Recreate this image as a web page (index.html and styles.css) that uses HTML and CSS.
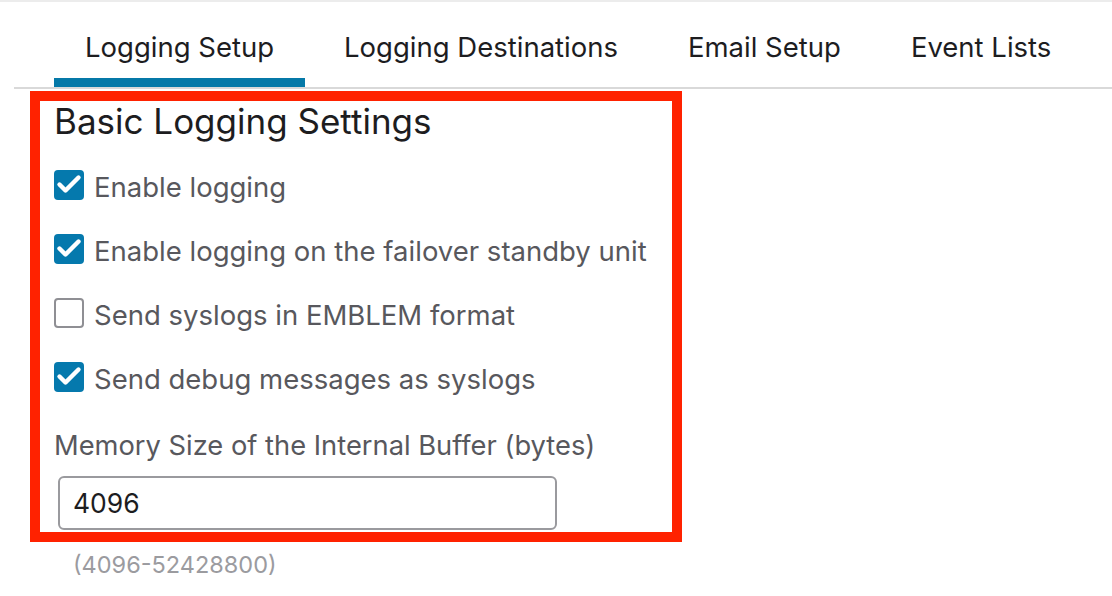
FILE: index.html
```html
<!DOCTYPE html>
<html lang="en">
<head>
<meta charset="utf-8">
<title>Logging Setup</title>
<link rel="stylesheet" href="styles.css">
</head>
<body>
<div class="page">
  <nav class="tabs">
    <a class="tab active">Logging Setup</a>
    <a class="tab">Logging Destinations</a>
    <a class="tab">Email Setup</a>
    <a class="tab">Event Lists</a>
  </nav>

  <section class="panel">
    <h2 class="panel-title">Basic Logging Settings</h2>

    <label class="check-row">
      <span class="box checked"><svg viewBox="0 0 30 30"><path d="M5.5 14.5l6 6L24.5 7.5" /></svg></span>
      <span class="check-label">Enable logging</span>
    </label>
    <label class="check-row">
      <span class="box checked"><svg viewBox="0 0 30 30"><path d="M5.5 14.5l6 6L24.5 7.5" /></svg></span>
      <span class="check-label">Enable logging on the failover standby unit</span>
    </label>
    <label class="check-row">
      <span class="box"></span>
      <span class="check-label">Send syslogs in EMBLEM format</span>
    </label>
    <label class="check-row">
      <span class="box checked"><svg viewBox="0 0 30 30"><path d="M5.5 14.5l6 6L24.5 7.5" /></svg></span>
      <span class="check-label">Send debug messages as syslogs</span>
    </label>

    <div class="field">
      <span class="field-label">Memory Size of the Internal Buffer (bytes)</span>
      <div class="input">4096</div>
    </div>
  </section>

  <p class="hint">(4096-52428800)</p>
</div>
</body>
</html>
```

FILE: styles.css
```css
html, body {
  margin: 0;
  padding: 0;
  background: #ffffff;
}

body {
  font-family: Inter, "Noto Sans", "Liberation Sans", sans-serif;
  border-top: 2px solid #ececec;
}

.page {
  display: flex;
  flex-direction: column;
  align-items: flex-start;
}

/* tab strip */
.tabs {
  align-self: stretch;
  margin-left: 14px;
  padding-left: 40px;
  display: flex;
  gap: 8px;
  border-bottom: 2px solid #d9d9d9;
}

.tab {
  padding: 0 31px;
  height: 85px;
  box-sizing: border-box;
  padding-top: 28px;
  font-size: 27.5px;
  color: #1d1d1f;
  border-bottom: 9px solid transparent;
  white-space: nowrap;
}

.tab.active {
  border-bottom-color: #0579a8;
}

/* outlined settings panel */
.panel {
  margin: 2px 0 0 30px;
  width: 652px;
  height: 451px;
  box-sizing: border-box;
  border: 10px solid #ff2200;
  padding: 0 0 0 14px;
  display: flex;
  flex-direction: column;
}

.panel-title {
  margin: 0;
  height: 40px;
  line-height: 40px;
  font-size: 35px;
  font-weight: 400;
  color: #1d1d1f;
  margin-bottom: 12px;
}

.check-row {
  display: flex;
  align-items: center;
  gap: 10px;
  height: 64px;
}

.box {
  width: 30px;
  height: 30px;
  box-sizing: border-box;
  border-radius: 4px;
  border: 2px solid #8f8f94;
  background: #ffffff;
  flex: none;
  display: flex;
}

.box.checked {
  border: none;
  background: #0579ad;
}

.box svg {
  width: 30px;
  height: 30px;
}

.box path {
  fill: none;
  stroke: #ffffff;
  stroke-width: 4.4;
  stroke-linecap: round;
  stroke-linejoin: round;
}

.check-label {
  padding-top: 4px;
  font-size: 27.5px;
  color: #58585d;
}

.field {
  display: flex;
  flex-direction: column;
  margin-top: 22px;
}

.field-label {
  font-size: 27.3px;
  color: #58585d;
  line-height: 30px;
}

.input {
  margin: 15px 0 0 4px;
  width: 499px;
  height: 54px;
  box-sizing: border-box;
  border: 2px solid #9a9a9e;
  border-radius: 6px;
  padding-left: 13px;
  font-size: 26.5px;
  line-height: 50px;
  color: #1d1d1f;
}

.hint {
  margin: 8px 0 0 73px;
  font-size: 23.5px;
  color: #9b9b9f;
}
```
